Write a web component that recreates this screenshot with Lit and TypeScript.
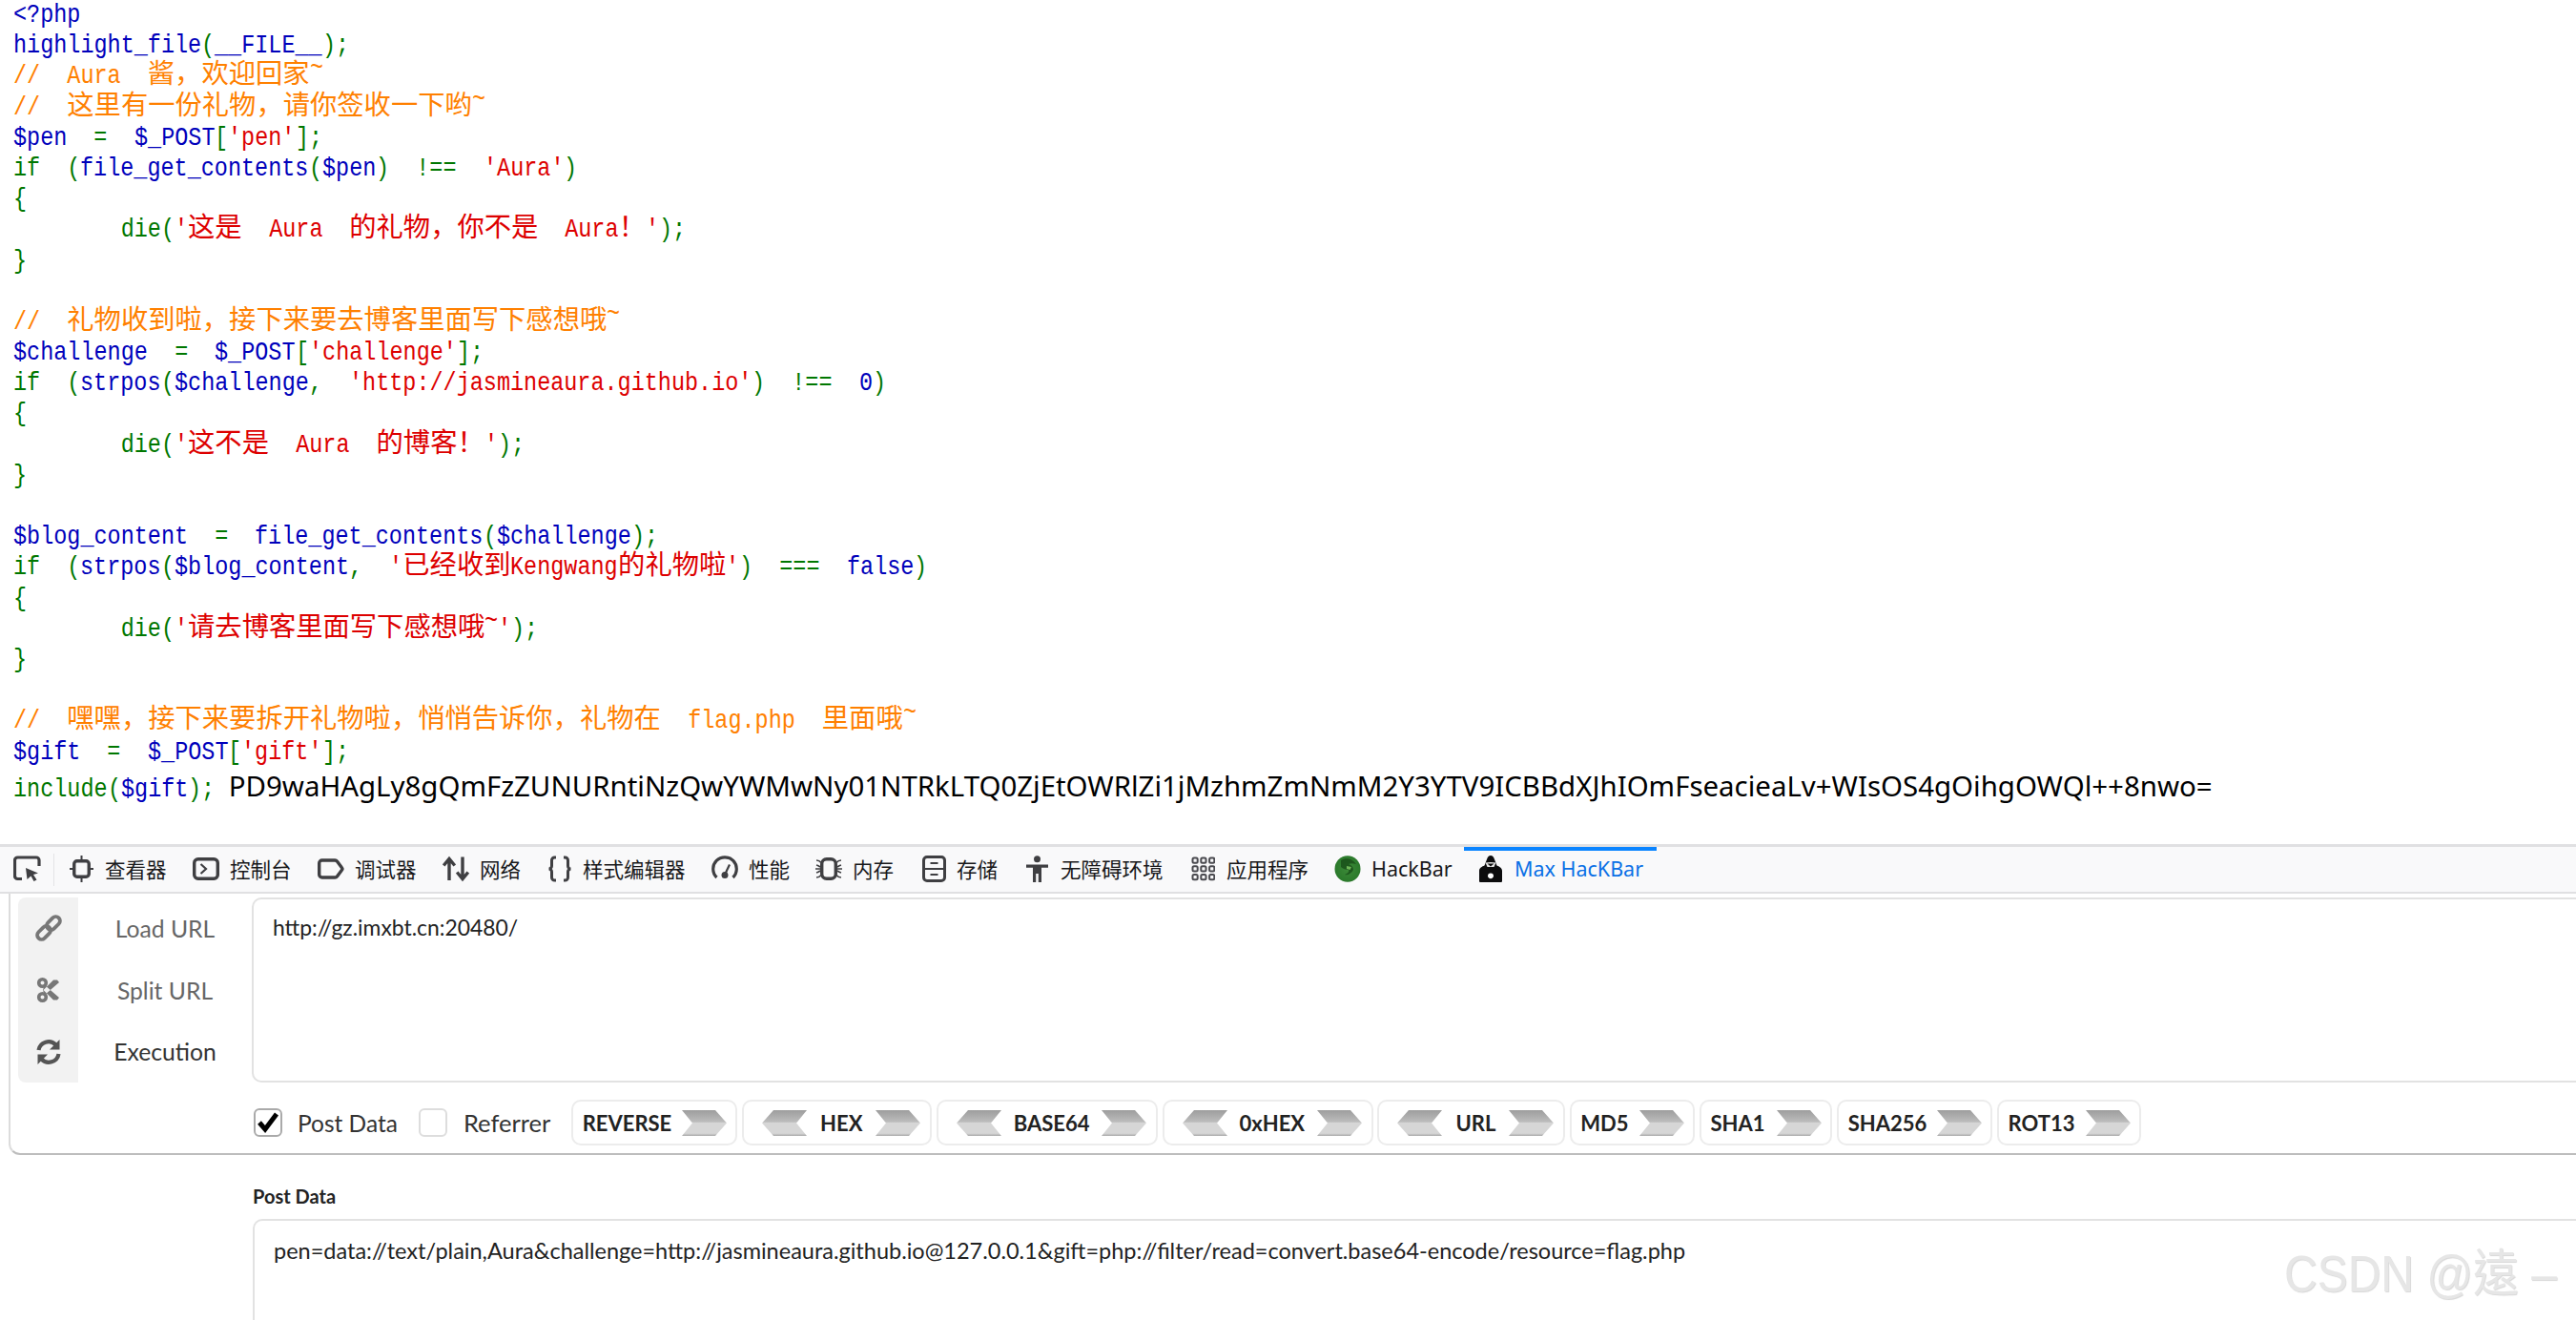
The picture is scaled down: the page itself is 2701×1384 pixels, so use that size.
import { LitElement, html, css, svg } from "lit";
import { customElement } from "lit/decorators.js";

type Run = [string, string];
const K = "k", C = "c", S = "s", D = "d";
const CODE: Run[][] = [
  [[D, "<?php"]],
  [[D, "highlight_file"], [K, "("], [D, "__FILE__"], [K, ");"]],
  [[C, "//  Aura  酱，欢迎回家~"]],
  [[C, "//  这里有一份礼物，请你签收一下哟~"]],
  [[D, "$pen"], [K, "  =  "], [D, "$_POST"], [K, "["], [S, "'pen'"], [K, "];"]],
  [[K, "if  ("], [D, "file_get_contents"], [K, "("], [D, "$pen"], [K, ")  !==  "], [S, "'Aura'"], [K, ")"]],
  [[K, "{"]],
  [[K, "        die("], [S, "'这是  Aura  的礼物，你不是  Aura！'"], [K, ");"]],
  [[K, "}"]],
  [],
  [[C, "//  礼物收到啦，接下来要去博客里面写下感想哦~"]],
  [[D, "$challenge"], [K, "  =  "], [D, "$_POST"], [K, "["], [S, "'challenge'"], [K, "];"]],
  [[K, "if  ("], [D, "strpos"], [K, "("], [D, "$challenge"], [K, ",  "], [S, "'http://jasmineaura.github.io'"], [K, ")  !==  "], [D, "0"], [K, ")"]],
  [[K, "{"]],
  [[K, "        die("], [S, "'这不是  Aura  的博客！'"], [K, ");"]],
  [[K, "}"]],
  [],
  [[D, "$blog_content"], [K, "  =  "], [D, "file_get_contents"], [K, "("], [D, "$challenge"], [K, ");"]],
  [[K, "if  ("], [D, "strpos"], [K, "("], [D, "$blog_content"], [K, ",  "], [S, "'已经收到Kengwang的礼物啦'"], [K, ")  ===  "], [D, "false"], [K, ")"]],
  [[K, "{"]],
  [[K, "        die("], [S, "'请去博客里面写下感想哦~'"], [K, ");"]],
  [[K, "}"]],
  [],
  [[C, "//  嘿嘿，接下来要拆开礼物啦，悄悄告诉你，礼物在  flag.php  里面哦~"]],
  [[D, "$gift"], [K, "  =  "], [D, "$_POST"], [K, "["], [S, "'gift'"], [K, "];"]],
];

const B64 = "PD9waHAgLy8gQmFzZUNURntiNzQwYWMwNy01NTRkLTQ0ZjEtOWRlZi1jMzhmZmNmM2Y3YTV9ICBBdXJhIOmFseacieaLv+WIsOS4gOihgOWQl++8nwo=";
const POST = "pen=data://text/plain,Aura&challenge=http://jasmineaura.github.io@127.0.0.1&gift=php://filter/read=convert.base64-encode/resource=flag.php";

const CELL = 14.08;
function runs(text: string, cls: string) {
  const parts = text.match(/[\u2E80-\uFFEF]+|~|[^\u2E80-\uFFEF~]+/g) || [];
  return parts.map((p) =>
    /[\u2E80-\uFFEF]/.test(p)
      ? html`<span class="cjk ${cls}">${p}</span>`
      : html`<span class="lat ${cls} ${p === "~" ? "tl" : ""}" style="width:${(p.length * CELL).toFixed(2)}px">${p}</span>`
  );
}

const INK = "#3f3f42";
const ICONS: Record<string, [number, unknown]> = {
  inspect: [29, svg`<path d="M9 24.500H4.500a3 3 0 0 1-3-3V5a3 3 0 0 1 3-3H24a3 3 0 0 1 3 3v6" fill="none" stroke="${INK}" stroke-width="3.200"/><path d="M13 13l13 5.500-5 1.500 3.500 5.500-3 1.500-3-5.500-4 3.500z" fill="${INK}"/>`],
  viewer: [26, svg`<rect x="4.750" y="5.750" width="15.500" height="16.500" rx="3" fill="none" stroke="${INK}" stroke-width="3.400"/><path d="M12.500 0v5M12.500 23v5M0 14h4M21 14h4" stroke="${INK}" stroke-width="2"/>`],
  console: [28, svg`<rect x="1.700" y="3.700" width="24.600" height="20.600" rx="4" fill="none" stroke="${INK}" stroke-width="3.400"/><path d="M8.500 9l5.500 5-5.500 5" fill="none" stroke="${INK}" stroke-width="2.200"/>`],
  debug: [28, svg`<path d="M1.700 8a3 3 0 0 1 3-3h13.500a3 3 0 0 1 2.400 1.200l4.800 6.600a1.800 1.800 0 0 1 0 2.400l-4.800 6.600a3 3 0 0 1-2.400 1.200H4.700a3 3 0 0 1-3-3z" fill="none" stroke="${INK}" stroke-width="3.400"/>`],
  net: [28, svg`<path d="M7 26V4M1.200 10.500L7 3.500l5.800 7M21 1.500v22.500M15.200 17.500l5.800 7 5.800-7" fill="none" stroke="${INK}" stroke-width="3.400"/>`],
  style: [26, svg`<path d="M9 2H7.500a3 3 0 0 0-3 3v6a3 3 0 0 1-3 3 3 3 0 0 1 3 3v6a3 3 0 0 0 3 3H9M17 2h1.500a3 3 0 0 1 3 3v6a3 3 0 0 0 3 3 3 3 0 0 0-3 3v6a3 3 0 0 1-3 3H17" fill="none" stroke="${INK}" stroke-width="3"/>`],
  perf: [28, svg`<path d="M5.500 23A12.300 12.300 0 1 1 22.500 23" fill="none" stroke="${INK}" stroke-width="3.200"/><path d="M14 20L19 9.500" stroke="${INK}" stroke-width="2.200"/><circle cx="14" cy="20.500" r="3.500" fill="${INK}"/>`],
  memory: [28, svg`<rect x="6.700" y="3.700" width="14.600" height="20.600" rx="5" fill="none" stroke="${INK}" stroke-width="3.400"/><path d="M1 5q3 0 5 2.500M0 14h6M1 23q3 0 5-2.500M1 10q2 .5 4 2M1 18q2-.5 4-2M27 5q-3 0-5 2.500M28 14h-6M27 23q-3 0-5-2.500M27 10q-2 .5-4 2M27 18q-2-.5-4-2" fill="none" stroke="${INK}" stroke-width="1.600"/>`],
  storage: [25, svg`<rect x="1.500" y="1.500" width="22" height="25" rx="3.500" fill="none" stroke="${INK}" stroke-width="3"/><path d="M2 14h21M8.500 8h8M8.500 20h8" stroke="${INK}" stroke-width="2.200"/>`],
  a11y: [25, svg`<circle cx="12.500" cy="3.800" r="3.500" fill="${INK}"/><path d="M1 9.500h23v3.200h-7V28h-3.200v-9h-2.600v9H8V12.700H1z" fill="${INK}"/>`],
  apps: [25, svg`${[0, 1, 2].flatMap((r) => [0, 1, 2].map((c) => svg`<rect x="${1.5 + c * 8.8}" y="${2.5 + r * 8.8}" width="5.200" height="5.200" rx="1.500" fill="none" stroke="#4a4a4f" stroke-width="2"/>`))}`],
  hack: [28, svg`<defs><radialGradient id="hb" cx=".5" cy=".5" r=".6"><stop offset="0" stop-color="#3c8a38"/><stop offset=".8" stop-color="#2b7a2b"/><stop offset="1" stop-color="#1f5c1f"/></radialGradient></defs><ellipse cx="14" cy="14" rx="13.500" ry="13.800" fill="url(#hb)"/><path d="M7 5c5-3 12-2 16 4-3-1-6-1-8 0 3 1 5 3 5 6-2 4-6 6-9 5 3-1 5-3 4-5-3 0-6-1-8-3 0-3 0-5 0-7z" fill="#174a17" opacity=".75"/><path d="M13 11l5 1-1.500 3-3.500-1z" fill="#6fb658"/>`],
  max: [28, svg`<path d="M14 0c2 0 3 1.500 3.800 3.500l2.700 7c2.500 1 5.500 2.500 5.500 5.500v11a1 1 0 0 1-1 1H3a1 1 0 0 1-1-1V16c0-3 3-4.500 5.500-5.500l2.700-7C11 1.500 12 0 14 0z" fill="#0c0c0d"/><path d="M8.500 7.500c3.500-.8 7.500-.8 11 0l-2 4.500h-7z" fill="#e8e8e8"/><path d="M10.500 8.500h7l-3.500 3z" fill="#0c0c0d"/><path d="M14 18.500c2 0 3 1.200 3 2.800s-1.300 3-3 3-3-1.400-3-3 1-2.800 3-2.800z" fill="#fff"/>`],
};

const TABS: [string, string, number, number][] = [
  ["viewer", "查看器", 129, 37], ["console", "控制台", 131, 39], ["debug", "调试器", 131, 39], ["net", "网络", 110, 39],
  ["style", "样式编辑器", 172, 37], ["perf", "性能", 109, 39], ["memory", "内存", 112, 39], ["storage", "存储", 108, 36],
  ["a11y", "无障碍环境", 174, 37], ["apps", "应用程序", 150, 37], ["hack", "HackBar", 150, 39], ["max", "Max HacKBar", 202, 39],
];

function icon(name: string) {
  const [w, body] = ICONS[name];
  return html`<svg class="ti" width="${w}" height="28" viewBox="0 0 ${w} 28">${body}</svg>`;
}

const BTNS: [string, boolean, number][] = [
  ["REVERSE", false, 174], ["HEX", true, 199], ["BASE64", true, 232], ["0xHEX", true, 221],
  ["URL", true, 196.5], ["MD5", false, 131.5], ["SHA1", false, 139.5], ["SHA256", false, 163], ["ROT13", false, 151],
];

function arrow(left: boolean) {
  const pts = left ? "47,0 12,0 0,13.500 12,27 47,27 36,13.500" : "0,0 35,0 47,13.500 35,27 0,27 11,13.500";
  return svg`<svg class="arrow" width="47" height="27" viewBox="0 0 47 27">
    <defs><linearGradient id="ag" x1="0" y1="0" x2="0" y2="1">
      <stop offset="0" stop-color="#9d9d9d"/><stop offset=".45" stop-color="#bcbcbc"/>
      <stop offset=".5" stop-color="#d6d6d6"/><stop offset=".9" stop-color="#d6d6d6"/><stop offset="1" stop-color="#a8a8a8"/>
    </linearGradient></defs><polygon points="${pts}" fill="url(#ag)"/></svg>`;
}

@customElement("app-root")
export class AppRoot extends LitElement {
  static styles = css`
    :host { display: block; position: relative; width: 2701px; height: 1384px; overflow: hidden; background: #fff; }
    .code { padding: 0 0 0 14px; height: 885px; box-sizing: border-box; }
    .line { height: 32.2px; line-height: 32.2px; white-space: pre; display: flex; align-items: baseline; }
    .line.last { height: 38px; line-height: 38px; }
    .lat { display: inline-block; flex: none; font-family: "Liberation Mono", monospace; font-size: 28px; transform: scaleX(.838); transform-origin: left; white-space: pre; }
    .lat.tl { transform: scaleX(.838) translateY(-8px); }
    .cjk { font-family: "Noto Sans CJK SC", sans-serif; font-size: 28.3px; line-height: 20px; font-weight: 400; white-space: pre; flex: none; }
    .k { color: #007700; } .c { color: #ff8000; } .s { color: #dd0000; } .d { color: #0000bb; }
    .b64 { font-family: "Noto Sans", sans-serif; font-size: 29.43px; color: #000; margin-left: 14.5px; white-space: pre; }

    .bar { height: 47px; border-top: 3px solid #e0e0e2; border-bottom: 2px solid #e0e0e2; background: #f9f9fa; display: flex; align-items: center; box-sizing: content-box; }
    .pick { width: 56px; height: 47px; display: flex; align-items: center; padding: 0 0 1px 14px; box-sizing: border-box; }
    .div { width: 1px; height: 34px; background: #e4e4e6; margin-right: 2px; }
    .tab { height: 47px; display: flex; align-items: center; padding: 0 0 2px 14px; font: 400 21.5px "Noto Sans CJK SC", sans-serif; color: #18181a; box-sizing: border-box; position: relative; flex: none; }
    .tab.lat2 { font-family: "Noto Sans", "Noto Sans CJK SC", sans-serif; }
    .tab.active { color: #0a70e6; }
    .tab.active::before { content: ""; position: absolute; left: 0; right: 0; top: 0; height: 3.500px; background: #0a84ff; }
    .iw { display: block; flex: none; }
    .ti { display: block; }

    .panel { margin-left: 9px; height: 274px; box-sizing: border-box; border-left: 2px solid #dcdcdc; border-bottom: 2px solid #bdbdbd; border-bottom-left-radius: 12px; padding: 4px 0 0 8px; font-family: Lato, sans-serif; }
    .top { display: flex; height: 194px; }
    .side { width: 63px; flex: none; background: #f2f2f2; border-radius: 8px 0 0 8px; display: flex; flex-direction: column; }
    .side div { height: 64.700px; display: flex; align-items: center; justify-content: center; }
    .labels { width: 182px; flex: none; display: flex; flex-direction: column; font-size: 24.700px; }
    .labels div { height: 64.700px; display: flex; align-items: center; justify-content: center; color: #666; }
    .labels div.on { color: #333; }
    .ta { flex: 1; border: 2px solid #e2e2e2; border-right: 0; border-radius: 10px 0 0 10px; padding: 14px 0 0 20px; font-size: 22.900px; line-height: 30px; color: #222; box-sizing: border-box; }
    .opts { display: flex; align-items: center; margin-top: 18px; padding-left: 247px; height: 48px; }
    .cb { width: 30px; height: 30px; border: 2px solid #ddd; border-radius: 6px; box-sizing: border-box; flex: none; display: flex; align-items: center; justify-content: center; }
    .cb.on { border-color: #aaa; }
    .ol { font-size: 24.500px; color: #333; flex: none; margin: 0 22px 0 16px; }
    .ol.r { font-size: 25.500px; margin-left: 17px; }
    .btn { height: 48px; border: 2px solid #ececec; border-radius: 10px; box-sizing: border-box; display: flex; align-items: center; justify-content: space-between; flex: none; margin-right: 4.800px; padding: 0 9.500px 0 9.500px; font-weight: 700; font-size: 22px; color: #222; }
    .btn.la { padding-left: 19px; }
    .arrow { display: block; flex: none; }

    .post { padding: 31px 0 0 265px; font-family: Lato, sans-serif; }
    .ph { font-weight: 700; font-size: 20px; color: #222; line-height: 24px; height: 24px; }
    .pa { margin-top: 12px; height: 145px; border: 2px solid #e2e2e2; border-right: 0; border-bottom: 0; border-top-left-radius: 10px; padding: 16px 0 0 20px; font-size: 23.500px; line-height: 30px; color: #222; box-sizing: border-box; white-space: pre; }

    .wm { position: absolute; left: 2395px; top: 1293px; font: 400 53px "Liberation Sans", "Noto Sans CJK TC", sans-serif; color: #e6e6e6; text-shadow: 1px 1px 1px #d8d8d8; white-space: pre; transform: scaleX(.905); transform-origin: left; }
  `;

  render() {
    const sideIcons = [
      svg`<g transform="rotate(-45 14 14)" fill="none" stroke="#777" stroke-width="3.800"><rect x="-1" y="9.500" width="16" height="9" rx="4.500"/><rect x="13" y="9.500" width="16" height="9" rx="4.500"/></g>`,
      svg`<g fill="none" stroke="#777" stroke-width="3.600"><circle cx="7.500" cy="6.500" r="3.800"/><circle cx="7.500" cy="21.500" r="3.800"/></g><path d="M10 9l15 13-2 2.500-4 0-11-11zM10 19l15-13-2-2.500-4 0-11 11z" fill="#777"/>`,
      svg`<g fill="none" stroke="#555" stroke-width="4.200"><path d="M3.500 12a10.500 10.500 0 0 1 18-5.500M24.500 16a10.500 10.500 0 0 1-18 5.500"/></g><path d="M25.500 1v10.500H15zM2.500 27V16.500H13z" fill="#555"/>`,
    ];
    return html`
      <div class="code">
        ${CODE.map((l) => html`<div class="line">${l.map(([c, t]) => runs(t, c))}</div>`)}
        <div class="line last">${runs("include", K)}${runs("(", K)}${runs("$gift", D)}${runs(");", K)}<span class="b64">${B64}</span></div>
      </div>
      <div class="bar">
        <div class="pick">${icon("inspect")}</div><div class="div"></div>
        ${TABS.map(([ic, t, w, b], i) => html`<div class="tab ${i > 9 ? "lat2" : ""} ${i === 11 ? "active" : ""}" style="width:${w}px"><span class="iw" style="width:${b}px">${icon(ic)}</span><span>${t}</span></div>`)}
      </div>
      <div class="panel">
        <div class="top">
          <div class="side">${sideIcons.map((s) => html`<div><svg width="28" height="28" viewBox="0 0 28 28">${s}</svg></div>`)}</div>
          <div class="labels"><div>Load URL</div><div>Split URL</div><div class="on">Execution</div></div>
          <div class="ta">http://gz.imxbt.cn:20480/</div>
        </div>
        <div class="opts">
          <div class="cb on"><svg width="24" height="24" viewBox="0 0 24 24"><path d="M3 12l6 7L21 3" fill="none" stroke="#000" stroke-width="5"/></svg></div>
          <span class="ol">Post Data</span>
          <div class="cb"></div>
          <span class="ol r">Referrer</span>
          ${BTNS.map(([t, l, w]) => html`<div class="btn ${l ? "la" : ""}" style="width:${w}px">${l ? arrow(true) : ""}<span>${t}</span>${arrow(false)}</div>`)}
        </div>
      </div>
      <div class="post">
        <div class="ph">Post Data</div>
        <div class="pa">${POST}</div>
      </div>
      <div class="wm">CSDN @遠 –</div>
    `;
  }
}
